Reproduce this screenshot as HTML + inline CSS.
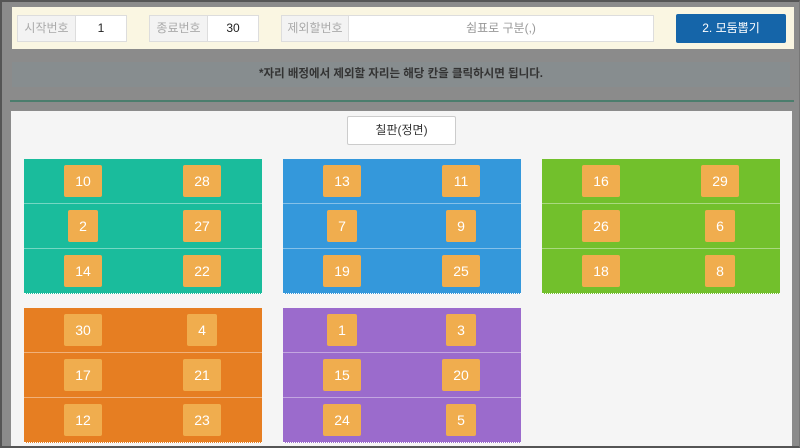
<!DOCTYPE html>
<html><head><meta charset="utf-8"><style>
*{box-sizing:border-box;margin:0;padding:0}
body{width:800px;height:448px;background:#8b8b8b;font-family:"Liberation Sans","Noto Sans CJK KR",sans-serif;position:relative;overflow:hidden;border:2px solid #555;border-right:1px solid #777}
.a{position:absolute}
.top{left:10px;top:5px;width:782px;height:42px;background:#faf6e2}
.lab{background:#f3f3f3;border:1px solid #ddd;color:#aaa;font-size:12px;text-align:center;line-height:25px;height:27px}
.val{background:#fff;border:1px solid #ddd;font-size:12px;text-align:center;line-height:25px;height:27px;color:#222}
.btn{left:674px;top:12px;width:110px;height:29px;background:#1565a9;color:#fff;font-size:12px;text-align:center;line-height:29px;border-radius:2px}
.note{left:10px;top:60px;width:778px;height:25px;background:#878d8f;color:#333;font-size:11.5px;font-weight:bold;text-align:center;line-height:25px}
.line{left:8px;top:98px;width:784px;height:2px;background:#4b7d6d}
.panel{left:9px;top:109px;width:781px;height:335px;background:#f5f5f5}
.board{left:345px;top:114px;width:109px;height:29px;background:#fff;border:1px solid #ccc;border-radius:2px;font-size:12px;text-align:center;line-height:27px;color:#333}
.g{width:238px;height:135px;border-bottom:1px dotted #fff}
.r{height:45px;border-bottom:1px solid rgba(255,255,255,.4);position:relative}
.r:last-child{border-bottom:none}
.b{position:absolute;top:6px;height:32px;background:#f0ad4e;color:#fff;font-size:14px;text-align:center;line-height:32px;border-radius:2px}
</style></head><body>
<div class="a top"></div>
<div class="a lab" style="left:15px;top:13px;width:59px">시작번호</div>
<div class="a val" style="left:73px;top:13px;width:52px">1</div>
<div class="a lab" style="left:147px;top:13px;width:59px">종료번호</div>
<div class="a val" style="left:205px;top:13px;width:52px">30</div>
<div class="a lab" style="left:279px;top:13px;width:68px">제외할번호</div>
<div class="a val" style="left:346px;top:13px;width:306px;color:#999">쉼표로 구분(,)</div>
<div class="a btn">2. 모둠뽑기</div>
<div class="a note">*자리 배정에서 제외할 자리는 해당 칸을 클릭하시면 됩니다.</div>
<div class="a line"></div>
<div class="a panel"></div>
<div class="a board">칠판(정면)</div>

<div class="a g" style="left:22px;top:157px;background:#1abc9c">
<div class="r"><div class="b" style="left:40px;width:38px">10</div><div class="b" style="left:159px;width:38px">28</div></div>
<div class="r"><div class="b" style="left:44px;width:30px">2</div><div class="b" style="left:159px;width:38px">27</div></div>
<div class="r"><div class="b" style="left:40px;width:38px">14</div><div class="b" style="left:159px;width:38px">22</div></div>
</div>
<div class="a g" style="left:281px;top:157px;background:#3498db">
<div class="r"><div class="b" style="left:40px;width:38px">13</div><div class="b" style="left:159px;width:38px">11</div></div>
<div class="r"><div class="b" style="left:44px;width:30px">7</div><div class="b" style="left:163px;width:30px">9</div></div>
<div class="r"><div class="b" style="left:40px;width:38px">19</div><div class="b" style="left:159px;width:38px">25</div></div>
</div>
<div class="a g" style="left:540px;top:157px;background:#72c02c">
<div class="r"><div class="b" style="left:40px;width:38px">16</div><div class="b" style="left:159px;width:38px">29</div></div>
<div class="r"><div class="b" style="left:40px;width:38px">26</div><div class="b" style="left:163px;width:30px">6</div></div>
<div class="r"><div class="b" style="left:40px;width:38px">18</div><div class="b" style="left:163px;width:30px">8</div></div>
</div>
<div class="a g" style="left:22px;top:306px;background:#e67e22">
<div class="r"><div class="b" style="left:40px;width:38px">30</div><div class="b" style="left:163px;width:30px">4</div></div>
<div class="r"><div class="b" style="left:40px;width:38px">17</div><div class="b" style="left:159px;width:38px">21</div></div>
<div class="r"><div class="b" style="left:40px;width:38px">12</div><div class="b" style="left:159px;width:38px">23</div></div>
</div>
<div class="a g" style="left:281px;top:306px;background:#9b6bcc">
<div class="r"><div class="b" style="left:44px;width:30px">1</div><div class="b" style="left:163px;width:30px">3</div></div>
<div class="r"><div class="b" style="left:40px;width:38px">15</div><div class="b" style="left:159px;width:38px">20</div></div>
<div class="r"><div class="b" style="left:40px;width:38px">24</div><div class="b" style="left:163px;width:30px">5</div></div>
</div>
</body></html>
